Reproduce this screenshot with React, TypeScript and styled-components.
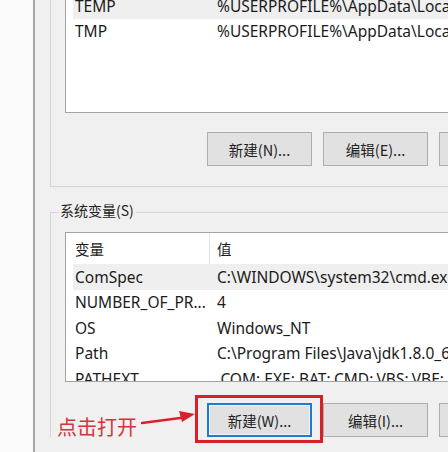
import React from "react";
import styled, { createGlobalStyle } from "styled-components";

const GlobalStyle = createGlobalStyle`
  html, body { margin: 0; padding: 0; background: #fbfbfb; }
  body { font-family: "Noto Sans", "Noto Sans CJK SC", sans-serif; }
  #root { width: 448px; height: 452px; overflow: hidden; }
`;

const Page = styled.div`
  width: 448px;
  height: 452px;
  overflow: hidden;
  display: flex;
  padding-left: 33px;
  box-sizing: border-box;
`;

const Window = styled.div`
  flex: none;
  width: 560px;
  height: 100%;
  box-sizing: border-box;
  background: #f0f0f0;
  border-left: 2px solid #a6a6a6;
  padding-left: 15px;
  font-family: "Noto Sans", "Noto Sans CJK SC", sans-serif;
  font-size: 15.5px;
  color: #1b1b1b;
`;

const UserGroup = styled.div`
  border: 1px solid #d6d6d6;
  border-top: none;
  padding: 0 0 20px 14px;
`;

const SystemGroup = styled.fieldset`
  margin: 16px 0 0;
  padding: 11px 0 0 14px;
  border: 1px solid #d6d6d6;
  border-right: none;
  border-bottom: none;
  min-width: 0;
`;

const GroupLegend = styled.legend`
  padding: 0 2px 4px;
  margin-left: -7px;
  font-family: "Noto Sans CJK SC", sans-serif;
  font-size: 14px;
  line-height: 14px;
  color: #222;
`;

const ListBox = styled.div<{ $height: number; $cropTop?: boolean }>`
  height: ${(p) => p.$height}px;
  margin-top: ${(p) => (p.$cropTop ? "-8px" : "0")};
  box-sizing: border-box;
  border: 1px solid #a4a4a4;
  background: #fff;
  overflow: hidden;
`;

const Row = styled.div<{ $hover?: boolean; $header?: boolean }>`
  display: flex;
  align-items: center;
  height: ${(p) => (p.$header ? "31px" : "25.5px")};
  margin-left: 7px;
  white-space: nowrap;
  background: ${(p) => (p.$hover ? "#efefef" : "transparent")};
`;

const NameCell = styled.div<{ $header?: boolean }>`
  flex: none;
  width: 137px;
  height: 100%;
  display: flex;
  align-items: center;
  box-sizing: border-box;
  padding-left: 2px;
  overflow: hidden;
  border-right: ${(p) => (p.$header ? "1px solid #e3e3e3" : "none")};
  font-family: ${(p) =>
    p.$header ? '"Noto Sans CJK SC", sans-serif' : '"Noto Sans", sans-serif'};
  font-size: ${(p) => (p.$header ? "14.5px" : "15.5px")};
`;

const ValueCell = styled.div<{ $header?: boolean }>`
  padding-left: 7px;
  font-family: ${(p) =>
    p.$header ? '"Noto Sans CJK SC", sans-serif' : '"Noto Sans", sans-serif'};
  font-size: ${(p) => (p.$header ? "14.5px" : "15.5px")};
`;

const ButtonRow = styled.div<{ $top: number }>`
  display: flex;
  gap: 11px;
  padding-left: 142px;
  margin-top: ${(p) => p.$top}px;
`;

const Button = styled.button<{ $focused?: boolean }>`
  flex: none;
  width: 105px;
  height: 34px;
  box-sizing: border-box;
  margin: 0;
  padding: 0;
  background: #e1e1e1;
  border: ${(p) => (p.$focused ? "2px solid #1f7bd0" : "1px solid #adadad")};
  box-shadow: ${(p) => (p.$focused ? "inset 0 0 0 1px #f4f4f4" : "none")};
  font-family: "Noto Sans CJK SC", sans-serif;
  font-size: 14.5px;
  color: #222;
`;

const Marked = styled.div`
  position: relative;
  flex: none;
  display: flex;
  &::after {
    content: "";
    position: absolute;
    top: -8px;
    left: -12px;
    right: -11px;
    bottom: -6px;
    border: 3px solid #dc1f26;
    pointer-events: none;
  }
`;

const Annotation = styled.div`
  position: absolute;
  right: calc(100% + 11px);
  top: 7px;
  display: flex;
  align-items: flex-start;
  gap: 3px;
  white-space: nowrap;
`;

const AnnotationText = styled.span`
  margin-top: 5px;
  font-family: "Noto Sans CJK SC", sans-serif;
  font-size: 20px;
  line-height: 24px;
  color: #d8323a;
`;

const userRows = [
  { name: "TEMP", value: "%USERPROFILE%\\AppData\\Local\\Temp", hover: true },
  { name: "TMP", value: "%USERPROFILE%\\AppData\\Local\\Temp" },
];

const systemRows = [
  { name: "ComSpec", value: "C:\\WINDOWS\\system32\\cmd.exe", hover: true },
  { name: "NUMBER_OF_PR...", value: "4" },
  { name: "OS", value: "Windows_NT" },
  { name: "Path", value: "C:\\Program Files\\Java\\jdk1.8.0_65\\bin;C:\\ProgramData" },
  { name: "PATHEXT", value: ".COM;.EXE;.BAT;.CMD;.VBS;.VBE;.JS" },
];

const Arrow = () => (
  <svg width="56" height="16" viewBox="0 0 56 16">
    <line x1="2" y1="13" x2="44" y2="7.5" stroke="#d8222a" strokeWidth="2.4" strokeLinecap="round" />
    <polygon points="39,1 55,4 42,12" fill="#d8222a" />
  </svg>
);

export default function App() {
  return (
    <>
      <GlobalStyle />
      <Page>
        <Window>
          <UserGroup>
            <ListBox $height={121} $cropTop>
              {userRows.map((r) => (
                <Row key={r.name} $hover={r.hover}>
                  <NameCell>{r.name}</NameCell>
                  <ValueCell>{r.value}</ValueCell>
                </Row>
              ))}
            </ListBox>
            <ButtonRow $top={19}>
              <Button>新建(N)...</Button>
              <Button>编辑(E)...</Button>
              <Button>删除(D)</Button>
            </ButtonRow>
          </UserGroup>
          <SystemGroup>
            <GroupLegend>系统变量(S)</GroupLegend>
            <ListBox $height={150}>
              <Row $header>
                <NameCell $header>变量</NameCell>
                <ValueCell $header>值</ValueCell>
              </Row>
              {systemRows.map((r) => (
                <Row key={r.name} $hover={r.hover}>
                  <NameCell>{r.name}</NameCell>
                  <ValueCell>{r.value}</ValueCell>
                </Row>
              ))}
            </ListBox>
            <ButtonRow $top={21}>
              <Marked>
                <Annotation>
                  <AnnotationText>点击打开</AnnotationText>
                  <Arrow />
                </Annotation>
                <Button $focused>新建(W)...</Button>
              </Marked>
              <Button>编辑(I)...</Button>
              <Button>删除(L)</Button>
            </ButtonRow>
          </SystemGroup>
        </Window>
      </Page>
    </>
  );
}
